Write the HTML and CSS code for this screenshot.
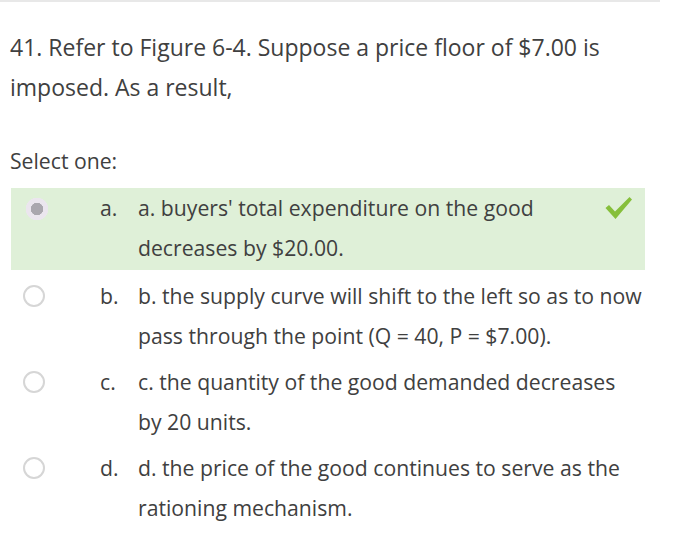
FILE: index.html
```
<!DOCTYPE html>
<html>
<head>
<meta charset="utf-8">
<link rel="stylesheet" href="styles.css">
</head>
<body>
<div class="page">
  <div class="topline"></div>
  <div class="question">41. Refer to Figure 6-4. Suppose a price floor of $7.00 is imposed. As a result,</div>
  <div class="prompt">Select one:</div>
  <div class="answers">
    <div class="option correct">
      <div class="radio-cell"><span class="radio checked"></span></div>
      <div class="letter">a.</div>
      <div class="text">a. buyers' total expenditure on the good decreases by $20.00.</div>
      <div class="mark">
        <svg width="28" height="24" viewBox="0 0 28 24"><path d="M0.5 11 L4 8 L10 14.5 L24.5 0 L27 2.5 L10.5 22 Z" fill="#86bf3b"/></svg>
      </div>
    </div>
    <div class="option">
      <div class="radio-cell"><span class="radio"></span></div>
      <div class="letter">b.</div>
      <div class="text">b. the supply curve will shift to the left so as to now pass through the point (Q = 40, P = $7.00).</div>
    </div>
    <div class="option">
      <div class="radio-cell"><span class="radio"></span></div>
      <div class="letter">c.</div>
      <div class="text">c. the quantity of the good demanded decreases by 20 units.</div>
    </div>
    <div class="option">
      <div class="radio-cell"><span class="radio"></span></div>
      <div class="letter">d.</div>
      <div class="text">d. the price of the good continues to serve as the rationing mechanism.</div>
    </div>
  </div>
</div>
</body>
</html>
```
FILE: styles.css
```
html, body {
  margin: 0;
  padding: 0;
  background: #ffffff;
}
body {
  font-family: "Open Sans", "Liberation Sans", sans-serif;
  color: #404040;
  font-size: 21.2px;
}
.page {
  width: 700px;
}
.topline {
  width: 660px;
  height: 2px;
  background: #e8e8e8;
}
.question {
  padding: 25px 80px 0 10px;
  line-height: 40px;
  font-size: 23px;
}
.prompt {
  margin-top: 34px;
  padding-left: 10px;
  line-height: 40px;
}
.answers {
  margin-top: 7px;
  display: flex;
  flex-direction: column;
  gap: 6px;
  padding-left: 11px;
  width: 634px;
}
.option {
  display: flex;
  align-items: flex-start;
  line-height: 40px;
  min-height: 80px;
}
.option.correct {
  background: #dff0d8;
  min-height: 82px;
}
.radio-cell {
  width: 89px;
  height: 40px;
  display: flex;
  align-items: center;
  padding-left: 12px;
  box-sizing: border-box;
  flex-shrink: 0;
}
.radio {
  display: block;
  width: 22px;
  height: 22px;
  border: 2px solid #d6d6d6;
  border-radius: 50%;
  box-sizing: border-box;
  background: #fff;
}
.radio.checked {
  border: none;
  background: radial-gradient(circle, #aaa7ae 0 6px, #ebe6ee 6.5px 11px, transparent 11.5px);
  width: 24px;
  height: 24px;
  margin-left: 2px;
  margin-top: 2px;
}
.letter {
  width: 38px;
  flex-shrink: 0;
}
.text {
  flex: 1;
  padding-right: 2px;
}
.mark {
  width: 40px;
  flex-shrink: 0;
  padding-top: 5px;
  box-sizing: border-box;
}
```
